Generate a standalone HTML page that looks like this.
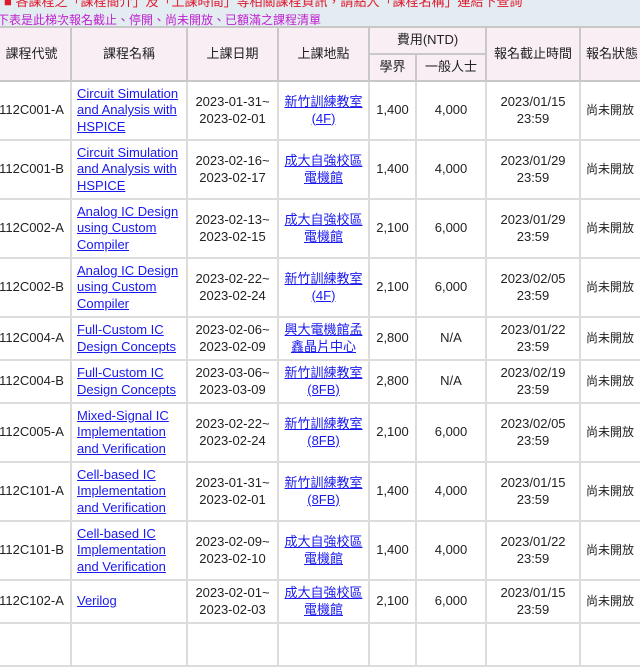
<!DOCTYPE html>
<html><head><meta charset="utf-8"><style>
html,body{margin:0;padding:0;width:640px;height:629px;overflow:hidden;background:#fff;font-family:"Liberation Sans","Noto Sans CJK TC",sans-serif;font-size:13px;color:#222}
.top{position:absolute;left:0;top:0;width:640px;height:27px;background:#e3edf1}
.l1{position:absolute;left:4px;top:-9px;color:#e0182d;font-size:13px;white-space:nowrap}
.l2{position:absolute;left:-3px;top:11px;color:#c020d0;font-size:12px;white-space:nowrap}
table{position:absolute;left:-9px;top:26px;border-collapse:collapse;table-layout:fixed;width:720px}
td,th{border:2px solid #dcdcdc;text-align:center;vertical-align:middle;padding:0 2px;line-height:16.5px;font-weight:normal;overflow:hidden}
th{background:#f8eef4;border-color:#c8c8c8;font-size:13px}
td.n{text-align:left;padding-left:5px}
td.st{text-align:left;padding-left:5px;font-size:12px}
a{color:#1a1aee;text-decoration:underline}
tr.h td,tr.h th{height:25px}
tr.t td{height:57px}
tr.s td{height:41px}
</style></head><body>
<div class="top"><div class="l1">■ 各課程之「課程簡介」及「上課時間」等相關課程資訊，請點入「課程名稱」連結下查詢</div><div class="l2">下表是此梯次報名截止、停開、尚未開放、已額滿之課程清單</div></div>
<table>
<colgroup><col style="width:79px"><col style="width:116px"><col style="width:91px"><col style="width:91px"><col style="width:47px"><col style="width:70px"><col style="width:94px"><col style="width:132px"></colgroup>
<tr class="h"><th rowspan="2">課程代號</th><th rowspan="2">課程名稱</th><th rowspan="2">上課日期</th><th rowspan="2">上課地點</th><th colspan="2">費用(NTD)</th><th rowspan="2">報名截止時間</th><th rowspan="2" style="text-align:left;padding-left:5px">報名狀態</th></tr>
<tr class="h"><th>學界</th><th>一般人士</th></tr>
<tr class="t"><td>112C001-A</td><td class="n"><a>Circuit Simulation and Analysis with HSPICE</a></td><td>2023-01-31~<br>2023-02-01</td><td><a>新竹訓練教室<br>(4F)</a></td><td>1,400</td><td>4,000</td><td>2023/01/15<br>23:59</td><td class="st">尚未開放</td></tr>
<tr class="t"><td>112C001-B</td><td class="n"><a>Circuit Simulation and Analysis with HSPICE</a></td><td>2023-02-16~<br>2023-02-17</td><td><a>成大自強校區<br>電機館</a></td><td>1,400</td><td>4,000</td><td>2023/01/29<br>23:59</td><td class="st">尚未開放</td></tr>
<tr class="t"><td>112C002-A</td><td class="n"><a>Analog IC Design using Custom Compiler</a></td><td>2023-02-13~<br>2023-02-15</td><td><a>成大自強校區<br>電機館</a></td><td>2,100</td><td>6,000</td><td>2023/01/29<br>23:59</td><td class="st">尚未開放</td></tr>
<tr class="t"><td>112C002-B</td><td class="n"><a>Analog IC Design using Custom Compiler</a></td><td>2023-02-22~<br>2023-02-24</td><td><a>新竹訓練教室<br>(4F)</a></td><td>2,100</td><td>6,000</td><td>2023/02/05<br>23:59</td><td class="st">尚未開放</td></tr>
<tr class="s"><td>112C004-A</td><td class="n"><a>Full-Custom IC Design Concepts</a></td><td>2023-02-06~<br>2023-02-09</td><td><a>興大電機館孟<br>鑫晶片中心</a></td><td>2,800</td><td>N/A</td><td>2023/01/22<br>23:59</td><td class="st">尚未開放</td></tr>
<tr class="s"><td>112C004-B</td><td class="n"><a>Full-Custom IC Design Concepts</a></td><td>2023-03-06~<br>2023-03-09</td><td><a>新竹訓練教室<br>(8FB)</a></td><td>2,800</td><td>N/A</td><td>2023/02/19<br>23:59</td><td class="st">尚未開放</td></tr>
<tr class="t"><td>112C005-A</td><td class="n"><a>Mixed-Signal IC Implementation and Verification</a></td><td>2023-02-22~<br>2023-02-24</td><td><a>新竹訓練教室<br>(8FB)</a></td><td>2,100</td><td>6,000</td><td>2023/02/05<br>23:59</td><td class="st">尚未開放</td></tr>
<tr class="t"><td>112C101-A</td><td class="n"><a>Cell-based IC Implementation and Verification</a></td><td>2023-01-31~<br>2023-02-01</td><td><a>新竹訓練教室<br>(8FB)</a></td><td>1,400</td><td>4,000</td><td>2023/01/15<br>23:59</td><td class="st">尚未開放</td></tr>
<tr class="t"><td>112C101-B</td><td class="n"><a>Cell-based IC Implementation and Verification</a></td><td>2023-02-09~<br>2023-02-10</td><td><a>成大自強校區<br>電機館</a></td><td>1,400</td><td>4,000</td><td>2023/01/22<br>23:59</td><td class="st">尚未開放</td></tr>
<tr class="s"><td>112C102-A</td><td class="n"><a>Verilog</a></td><td>2023-02-01~<br>2023-02-03</td><td><a>成大自強校區<br>電機館</a></td><td>2,100</td><td>6,000</td><td>2023/01/15<br>23:59</td><td class="st">尚未開放</td></tr>
<tr class="s"><td>&nbsp;</td><td></td><td></td><td></td><td></td><td></td><td></td><td></td></tr>
</table>
</body></html>
